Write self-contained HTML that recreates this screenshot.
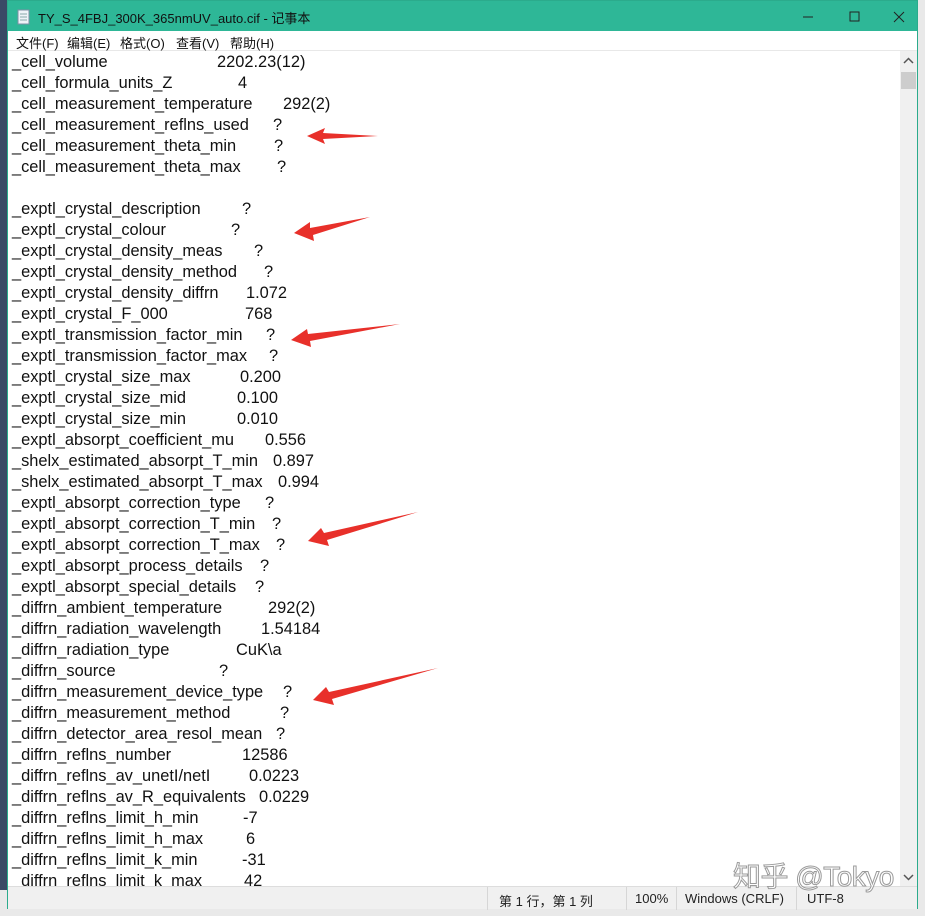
<!DOCTYPE html>
<html><head><meta charset="utf-8"><style>
*{margin:0;padding:0;box-sizing:border-box}
body{width:925px;height:916px;overflow:hidden;background:#e9e9e9;font-family:"Liberation Sans","Noto Sans CJK SC",sans-serif;position:relative}
#leftbg{position:absolute;left:0;top:0;width:8px;height:890px;background:#3a4a66}
#win{position:absolute;left:7px;top:0;width:911px;height:909px;background:#fff;border:1px solid #2bab8c}
#title{position:absolute;left:0;top:0;width:909px;height:30px;background:#2eb797;color:#111;font-size:13px}
#title .t{position:absolute;left:30px;top:7px}
#menu{position:absolute;left:0;top:30px;width:909px;height:20px;background:#fff;font-size:13px;color:#111;border-bottom:1px solid #e8e8e8}
#menu span{position:absolute;top:2px}
#text{position:absolute;left:0;top:50px;width:892px;height:835px;overflow:hidden;font-size:16.4px;color:#111}
.l{position:absolute;left:4px;height:21px;white-space:nowrap;line-height:21px}
.v{position:absolute;white-space:nowrap;line-height:21px}
#sb{position:absolute;left:892px;top:50px;width:17px;height:835px;background:#f0f0f0}
#status{position:absolute;left:0;top:885px;width:909px;height:23px;background:#f0f0f0;border-top:1px solid #ddd;font-size:13px;color:#222}
#status span{position:absolute;top:4px}
.sep{position:absolute;top:0;width:1px;height:23px;background:#d6d6d6}
</style></head><body>
<div id="leftbg"></div>
<div id="win">
<div id="title">
<svg style="position:absolute;left:9px;top:8px" width="14" height="16"><rect x="1" y="1" width="11" height="14" fill="#eef3f8" stroke="#7d8fa5"/><line x1="3" y1="5" x2="10" y2="5" stroke="#8aa"/><line x1="3" y1="8" x2="10" y2="8" stroke="#8aa"/><line x1="3" y1="11" x2="10" y2="11" stroke="#8aa"/></svg>
<span class="t">TY_S_4FBJ_300K_365nmUV_auto.cif - 记事本</span>
<svg style="position:absolute;left:790px;top:8px" width="110" height="16"><line x1="5" y1="8" x2="15" y2="8" stroke="#222"/><rect x="52" y="3" width="9" height="9" fill="none" stroke="#222"/><path d="M96 3 L106 13 M106 3 L96 13" stroke="#222"/></svg>
</div>
<div id="menu"><span style="left:8px">文件(F)</span><span style="left:59px">编辑(E)</span><span style="left:112px">格式(O)</span><span style="left:168px">查看(V)</span><span style="left:222px">帮助(H)</span></div>
<div id="text">
<div class="l" style="top:1px">_cell_volume</div><div class="v" style="top:1px;left:209px">2202.23(12)</div>
<div class="l" style="top:22px">_cell_formula_units_Z</div><div class="v" style="top:22px;left:230px">4</div>
<div class="l" style="top:43px">_cell_measurement_temperature</div><div class="v" style="top:43px;left:275px">292(2)</div>
<div class="l" style="top:64px">_cell_measurement_reflns_used</div><div class="v" style="top:64px;left:265px">?</div>
<div class="l" style="top:85px">_cell_measurement_theta_min</div><div class="v" style="top:85px;left:266px">?</div>
<div class="l" style="top:106px">_cell_measurement_theta_max</div><div class="v" style="top:106px;left:269px">?</div>
<div class="l" style="top:148px">_exptl_crystal_description</div><div class="v" style="top:148px;left:234px">?</div>
<div class="l" style="top:169px">_exptl_crystal_colour</div><div class="v" style="top:169px;left:223px">?</div>
<div class="l" style="top:190px">_exptl_crystal_density_meas</div><div class="v" style="top:190px;left:246px">?</div>
<div class="l" style="top:211px">_exptl_crystal_density_method</div><div class="v" style="top:211px;left:256px">?</div>
<div class="l" style="top:232px">_exptl_crystal_density_diffrn</div><div class="v" style="top:232px;left:238px">1.072</div>
<div class="l" style="top:253px">_exptl_crystal_F_000</div><div class="v" style="top:253px;left:237px">768</div>
<div class="l" style="top:274px">_exptl_transmission_factor_min</div><div class="v" style="top:274px;left:258px">?</div>
<div class="l" style="top:295px">_exptl_transmission_factor_max</div><div class="v" style="top:295px;left:261px">?</div>
<div class="l" style="top:316px">_exptl_crystal_size_max</div><div class="v" style="top:316px;left:232px">0.200</div>
<div class="l" style="top:337px">_exptl_crystal_size_mid</div><div class="v" style="top:337px;left:229px">0.100</div>
<div class="l" style="top:358px">_exptl_crystal_size_min</div><div class="v" style="top:358px;left:229px">0.010</div>
<div class="l" style="top:379px">_exptl_absorpt_coefficient_mu</div><div class="v" style="top:379px;left:257px">0.556</div>
<div class="l" style="top:400px">_shelx_estimated_absorpt_T_min</div><div class="v" style="top:400px;left:265px">0.897</div>
<div class="l" style="top:421px">_shelx_estimated_absorpt_T_max</div><div class="v" style="top:421px;left:270px">0.994</div>
<div class="l" style="top:442px">_exptl_absorpt_correction_type</div><div class="v" style="top:442px;left:257px">?</div>
<div class="l" style="top:463px">_exptl_absorpt_correction_T_min</div><div class="v" style="top:463px;left:264px">?</div>
<div class="l" style="top:484px">_exptl_absorpt_correction_T_max</div><div class="v" style="top:484px;left:268px">?</div>
<div class="l" style="top:505px">_exptl_absorpt_process_details</div><div class="v" style="top:505px;left:252px">?</div>
<div class="l" style="top:526px">_exptl_absorpt_special_details</div><div class="v" style="top:526px;left:247px">?</div>
<div class="l" style="top:547px">_diffrn_ambient_temperature</div><div class="v" style="top:547px;left:260px">292(2)</div>
<div class="l" style="top:568px">_diffrn_radiation_wavelength</div><div class="v" style="top:568px;left:253px">1.54184</div>
<div class="l" style="top:589px">_diffrn_radiation_type</div><div class="v" style="top:589px;left:228px">CuK\a</div>
<div class="l" style="top:610px">_diffrn_source</div><div class="v" style="top:610px;left:211px">?</div>
<div class="l" style="top:631px">_diffrn_measurement_device_type</div><div class="v" style="top:631px;left:275px">?</div>
<div class="l" style="top:652px">_diffrn_measurement_method</div><div class="v" style="top:652px;left:272px">?</div>
<div class="l" style="top:673px">_diffrn_detector_area_resol_mean</div><div class="v" style="top:673px;left:268px">?</div>
<div class="l" style="top:694px">_diffrn_reflns_number</div><div class="v" style="top:694px;left:234px">12586</div>
<div class="l" style="top:715px">_diffrn_reflns_av_unetI/netI</div><div class="v" style="top:715px;left:241px">0.0223</div>
<div class="l" style="top:736px">_diffrn_reflns_av_R_equivalents</div><div class="v" style="top:736px;left:251px">0.0229</div>
<div class="l" style="top:757px">_diffrn_reflns_limit_h_min</div><div class="v" style="top:757px;left:235px">-7</div>
<div class="l" style="top:778px">_diffrn_reflns_limit_h_max</div><div class="v" style="top:778px;left:238px">6</div>
<div class="l" style="top:799px">_diffrn_reflns_limit_k_min</div><div class="v" style="top:799px;left:234px">-31</div>
<div class="l" style="top:820px">_diffrn_reflns_limit_k_max</div><div class="v" style="top:820px;left:236px">42</div>
</div>
<div id="sb"><svg style="position:absolute;left:3px;top:6px" width="11" height="8"><path d="M1 6 L5.5 1.5 L10 6" fill="none" stroke="#555" stroke-width="1.5"/></svg><div style="position:absolute;left:1px;top:21px;width:15px;height:17px;background:#cdcdcd"></div><svg style="position:absolute;left:3px;top:822px" width="11" height="8"><path d="M1 2 L5.5 6.5 L10 2" fill="none" stroke="#555" stroke-width="1.5"/></svg></div>
<div id="status">
<div class="sep" style="left:479px"></div><span style="left:491px">第 1 行，第 1 列</span>
<div class="sep" style="left:618px"></div><span style="left:627px">100%</span>
<div class="sep" style="left:668px"></div><span style="left:677px">Windows (CRLF)</span>
<div class="sep" style="left:788px"></div><span style="left:799px">UTF-8</span>
</div>
</div>
<div style="position:absolute;left:733px;top:855px;font-size:28px;color:#fff;-webkit-text-stroke:1px #9a9a9a;white-space:nowrap;letter-spacing:-0.5px">知乎 @Tokyo</div>
<svg style="position:absolute;left:0;top:0" width="925" height="916">
<g fill="#e8302a">
<polygon points="307,136 325,128 323,133 378,136 323,139 325,144"/>
<polygon points="294,233 310,222 310,228 370,217 313,235 314,241"/>
<polygon points="291,340 307,329 308,334 400,324 310,341 311,347"/>
<polygon points="308,541 321,528 324,533 418,512 327,540 329,546"/>
<polygon points="313,700 326,687 329,692 438,668 332,699 334,705"/>
</g>
</svg>
</body></html>
